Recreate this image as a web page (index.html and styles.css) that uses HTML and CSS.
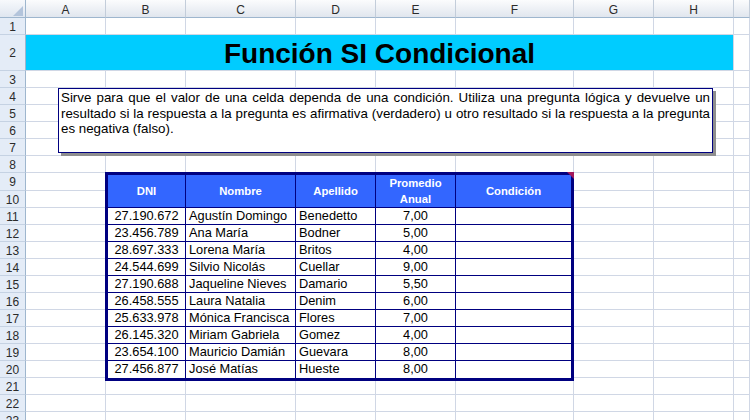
FILE: index.html
```html
<!DOCTYPE html>
<html lang="es">
<head>
<meta charset="utf-8">
<title>Función SI Condicional</title>
<link rel="stylesheet" href="styles.css">
</head>
<body>
<div class="sheet">
  <div class="corner"><svg width="10" height="10" viewBox="0 0 10 10"><path d="M10 0 L10 10 L0 10 Z" fill="#b3c4db"/></svg></div>
  <div class="ch">A</div><div class="ch">B</div><div class="ch">C</div><div class="ch">D</div><div class="ch">E</div><div class="ch">F</div><div class="ch">G</div><div class="ch">H</div><div class="ch"></div>

  <div class="rh">1</div><i></i><i></i><i></i><i></i><i></i><i></i><i></i><i></i><i></i>
  <div class="rh">2</div><div class="title">Función SI Condicional</div><i></i>
  <div class="rh">3</div><i></i><i></i><i></i><i></i><i></i><i></i><i></i><i></i><i></i>
  <div class="rh">4</div><i></i><i></i><i></i><i></i><i></i><i></i><i></i><i></i><i></i>
  <div class="rh">5</div><i></i><i></i><i></i><i></i><i></i><i></i><i></i><i></i><i></i>
  <div class="rh">6</div><i></i><i></i><i></i><i></i><i></i><i></i><i></i><i></i><i></i>
  <div class="rh">7</div><i></i><i></i><i></i><i></i><i></i><i></i><i></i><i></i><i></i>
  <div class="rh">8</div><i></i><i></i><i></i><i></i><i></i><i></i><i></i><i></i><i></i>
  <div class="rh">9</div><i></i><i></i><i></i><i></i>
  <div class="rh">10</div><i></i><i></i><i></i><i></i>
  <div class="rh">11</div><i></i><i></i><i></i><i></i>
  <div class="rh">12</div><i></i><i></i><i></i><i></i>
  <div class="rh">13</div><i></i><i></i><i></i><i></i>
  <div class="rh">14</div><i></i><i></i><i></i><i></i>
  <div class="rh">15</div><i></i><i></i><i></i><i></i>
  <div class="rh">16</div><i></i><i></i><i></i><i></i>
  <div class="rh">17</div><i></i><i></i><i></i><i></i>
  <div class="rh">18</div><i></i><i></i><i></i><i></i>
  <div class="rh">19</div><i></i><i></i><i></i><i></i>
  <div class="rh">20</div><i></i><i></i><i></i><i></i>
  <div class="rh">21</div><i></i><i></i><i></i><i></i><i></i><i></i><i></i><i></i><i></i>
  <div class="rh">22</div><i></i><i></i><i></i><i></i><i></i><i></i><i></i><i></i><i></i>
  <div class="rh">23</div><i></i><i></i><i></i><i></i><i></i><i></i><i></i><i></i><i></i>

  <div class="tbl">
    <div class="th">DNI</div>
    <div class="th">Nombre</div>
    <div class="th">Apellido</div>
    <div class="th">Promedio<br>Anual</div>
    <div class="th cond">Condición<span class="cmt"></span></div>

    <div class="c n">27.190.672</div><div class="c">Agustín Domingo</div><div class="c">Benedetto</div><div class="c n">7,00</div><div class="c"></div>
    <div class="c n">23.456.789</div><div class="c">Ana María</div><div class="c">Bodner</div><div class="c n">5,00</div><div class="c"></div>
    <div class="c n">28.697.333</div><div class="c">Lorena María</div><div class="c">Britos</div><div class="c n">4,00</div><div class="c"></div>
    <div class="c n">24.544.699</div><div class="c">Silvio Nicolás</div><div class="c">Cuellar</div><div class="c n">9,00</div><div class="c"></div>
    <div class="c n">27.190.688</div><div class="c">Jaqueline Nieves</div><div class="c">Damario</div><div class="c n">5,50</div><div class="c"></div>
    <div class="c n">26.458.555</div><div class="c">Laura Natalia</div><div class="c">Denim</div><div class="c n">6,00</div><div class="c"></div>
    <div class="c n">25.633.978</div><div class="c">Mónica Francisca</div><div class="c">Flores</div><div class="c n">7,00</div><div class="c"></div>
    <div class="c n">26.145.320</div><div class="c">Miriam Gabriela</div><div class="c">Gomez</div><div class="c n">4,00</div><div class="c"></div>
    <div class="c n">23.654.100</div><div class="c">Mauricio Damián</div><div class="c">Guevara</div><div class="c n">8,00</div><div class="c"></div>
    <div class="c n">27.456.877</div><div class="c">José Matías</div><div class="c">Hueste</div><div class="c n">8,00</div><div class="c"></div>
  </div>

  <div class="note">Sirve para que el valor de una celda dependa de una condición. Utiliza una pregunta lógica y devuelve un resultado si la respuesta a la pregunta es afirmativa (verdadero) u otro resultado si la respuesta a la pregunta es negativa (falso).</div>
</div>
</body>
</html>
```

FILE: styles.css
```css
html, body {
  margin: 0;
  height: 100%;
  overflow: hidden;
  background: #fff;
}

body {
  font-family: "Liberation Sans", Arial, sans-serif;
  color: #000;
}

.sheet {
  position: relative;
  display: grid;
  grid-template-columns: 26px 80px 80px 110px 80px 80px 118px 80px 80px 1fr;
  grid-template-rows: 18px 17px 36px repeat(6, 17px) 18px repeat(14, 17px);
}

.sheet i {
  display: block;
  border-right: 1px solid #d0d7e5;
  border-bottom: 1px solid #d0d7e5;
}

.corner {
  background: linear-gradient(#f7f9fc, #dfe6f0);
  border-right: 1px solid #9eb6ce;
  border-bottom: 1px solid #9eb6ce;
  display: flex;
  align-items: flex-end;
  justify-content: flex-end;
  padding: 0 2px 1px 0;
}

.corner svg {
  display: block;
}

.ch {
  background: linear-gradient(#fbfcfd, #e1e6ee);
  border-right: 1px solid #c3cdda;
  border-bottom: 1px solid #9eb6ce;
  font-size: 12px;
  color: #2b2b2b;
  display: flex;
  align-items: center;
  justify-content: center;
  padding-top: 2px;
}

.rh {
  background: #e4ecf7;
  border-right: 1px solid #9eb6ce;
  border-bottom: 1px solid #c5d2e3;
  font-size: 12px;
  color: #2b2b2b;
  display: flex;
  align-items: center;
  justify-content: center;
  padding-top: 1px;
}

.title {
  grid-column: span 8;
  background: #00ccff;
  border-right: 1px solid #d0d7e5;
  border-bottom: 1px solid #d0d7e5;
  font-size: 28px;
  font-weight: bold;
  display: flex;
  align-items: center;
  justify-content: center;
  padding-top: 2px;
}

.note {
  position: absolute;
  left: 58px;
  top: 88px;
  width: 655px;
  height: 65px;
  box-sizing: border-box;
  border: 1px solid #000080;
  background: #fff;
  box-shadow: 3px 3px 0 #8e8e8e;
  padding: 1px 2px 0;
  font-size: 13.33px;
  line-height: 15.5px;
  text-align: justify;
  z-index: 2;
}

.tbl {
  grid-column: 3 / 8;
  grid-row: 10 / 22;
  justify-self: start;
  align-self: start;
  margin: -1px 0 0 -1px;
  display: grid;
  grid-template-columns: 78px 110px 80px 80px 115px;
  grid-template-rows: 33px repeat(10, 17px);
  border: 3px solid #000080;
  background: #fff;
  position: relative;
  z-index: 1;
  font-size: 12.8px;
}

.th {
  background: #3366ff;
  color: #fff;
  font-weight: bold;
  font-size: 11.3px;
  line-height: 16px;
  text-align: center;
  display: flex;
  align-items: center;
  justify-content: center;
  border-right: 1px solid #000080;
  border-bottom: 1px solid #000080;
}

.cond {
  position: relative;
}

.cmt {
  position: absolute;
  top: -3px;
  right: -3px;
  width: 0;
  height: 0;
  border-top: 7px solid #a3195b;
  border-left: 7px solid transparent;
}

.c {
  border-right: 1px solid #000080;
  border-bottom: 1px solid #000080;
  line-height: 16px;
  padding: 0 3px;
  white-space: nowrap;
  overflow: hidden;
}

.n {
  text-align: center;
}

.tbl > :nth-child(5n) {
  border-right: 0;
}

.tbl > :nth-last-child(-n+5) {
  border-bottom: 0;
}
```
